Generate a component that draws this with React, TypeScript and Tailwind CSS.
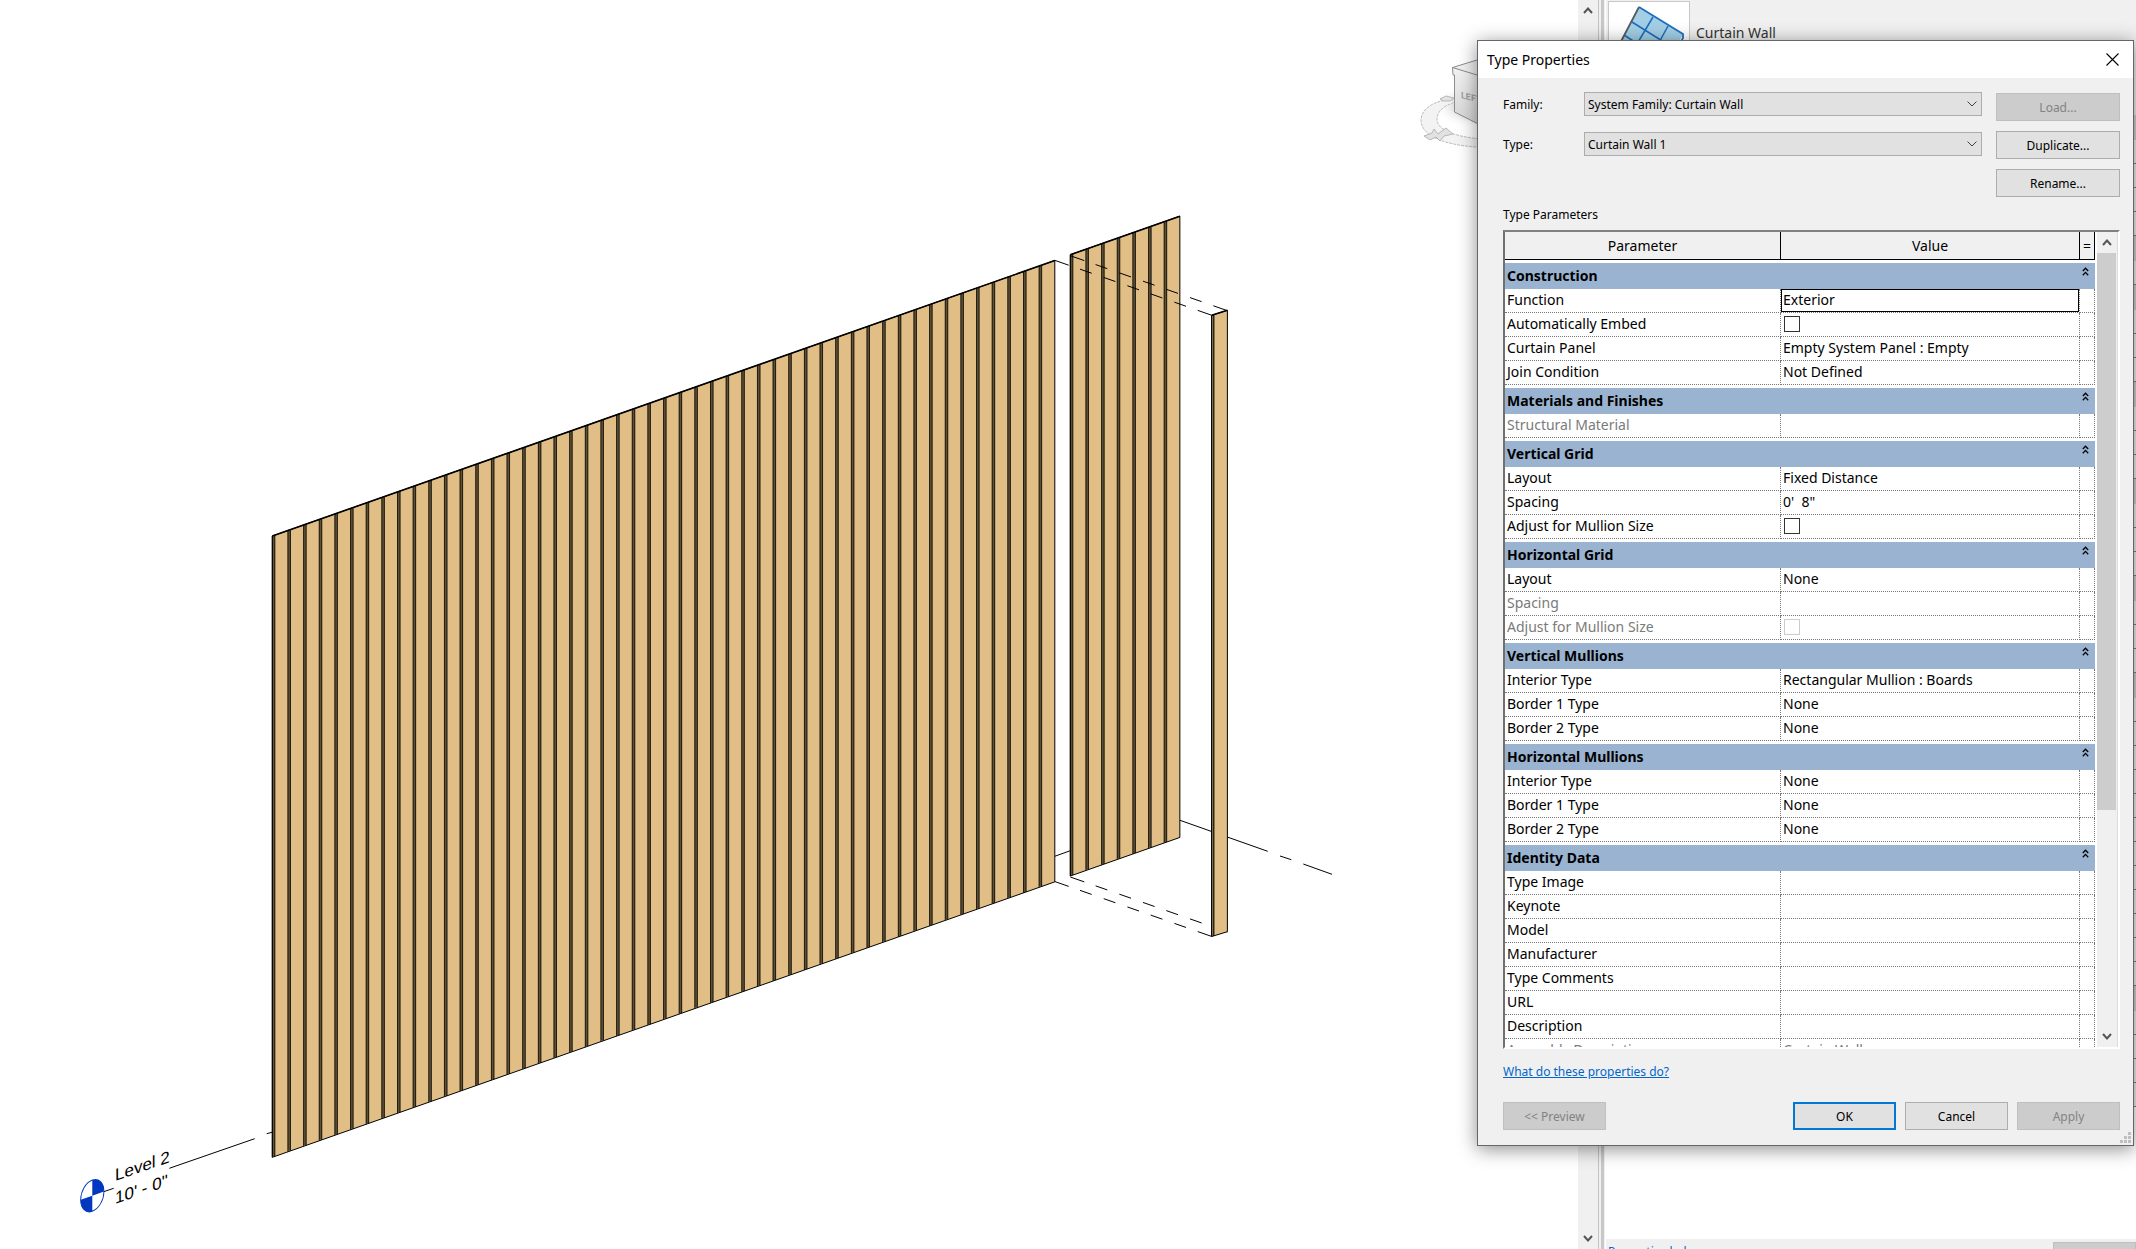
import { useState } from "react";
import type { ReactNode } from "react";
import clsx from "clsx";

type Param = {
  name: string;
  value?: string;
  kind?: "text" | "check" | "field";
  disabled?: boolean;
};

type Group = { title: string; params: Param[] };

const groups: Group[] = [
  {
    title: "Construction",
    params: [
      { name: "Function", value: "Exterior", kind: "field" },
      { name: "Automatically Embed", kind: "check" },
      { name: "Curtain Panel", value: "Empty System Panel : Empty" },
      { name: "Join Condition", value: "Not Defined" }
    ]
  },
  {
    title: "Materials and Finishes",
    params: [{ name: "Structural Material", disabled: true }]
  },
  {
    title: "Vertical Grid",
    params: [
      { name: "Layout", value: "Fixed Distance" },
      { name: "Spacing", value: "0'  8\"" },
      { name: "Adjust for Mullion Size", kind: "check" }
    ]
  },
  {
    title: "Horizontal Grid",
    params: [
      { name: "Layout", value: "None" },
      { name: "Spacing", disabled: true },
      { name: "Adjust for Mullion Size", kind: "check", disabled: true }
    ]
  },
  {
    title: "Vertical Mullions",
    params: [
      { name: "Interior Type", value: "Rectangular Mullion : Boards" },
      { name: "Border 1 Type", value: "None" },
      { name: "Border 2 Type", value: "None" }
    ]
  },
  {
    title: "Horizontal Mullions",
    params: [
      { name: "Interior Type", value: "None" },
      { name: "Border 1 Type", value: "None" },
      { name: "Border 2 Type", value: "None" }
    ]
  },
  {
    title: "Identity Data",
    params: [
      { name: "Type Image" },
      { name: "Keynote" },
      { name: "Model" },
      { name: "Manufacturer" },
      { name: "Type Comments" },
      { name: "URL" },
      { name: "Description" },
      { name: "Assembly Description", value: "Curtain Walls", disabled: true }
    ]
  }
];

// row counts of the instance property groups in the docked palette
const paletteGroups = [4, 1, 3, 3, 3, 3, 12, 4];

const PITCH = 15.65;
const SLOPE = 0.352;
const WALL_HEIGHT = 621.3;

// x ranges of each dash, measured along the offset line
const dashes = [
  [0, 14],
  [25.3, 37],
  [49, 60.7],
  [72.7, 84.3],
  [96, 107.7],
  [119.7, 131.3],
  [143, 157]
];

function Slats({ x, y, count }: { x: number; y: number; count: number }) {
  const width = count * PITCH;
  const rise = width * SLOPE;
  const outline = `M${x} ${y}L${x + width} ${y - rise}V${y - rise + WALL_HEIGHT}L${x} ${y + WALL_HEIGHT}Z`;

  return (
    <g>
      <path d={outline} fill="#e0be86" />
      {Array.from({ length: count }, (_, i) => {
        const left = x + i * PITCH;
        const top = y - i * PITCH * SLOPE;
        return (
          <g key={i}>
            <path d={`M${left - 0.3} ${top}h3.1v${WALL_HEIGHT - 1}h-3.1z`} fill="#5f5136" />
            <path
              d={`M${left} ${top}v${WALL_HEIGHT}M${left + 2.5} ${top - 1}v${WALL_HEIGHT}`}
              stroke="#16130b"
              strokeWidth="0.9"
            />
          </g>
        );
      })}
      <path d={outline} fill="none" stroke="#000" strokeWidth="1" />
      <path d={`M${x} ${y}L${x + width} ${y - rise}`} stroke="#000" strokeWidth="1.6" />
    </g>
  );
}

function OffsetLine({ x, y }: { x: number; y: number }) {
  const d = dashes.map(([a, b]) => `M${x + a} ${y + a * 0.35}L${x + b} ${y + b * 0.35}`).join("");
  return <path d={d} stroke="#000" strokeWidth="1" fill="none" />;
}

function ModelView() {
  return (
    <svg viewBox="0 0 1578 1249" preserveAspectRatio="xMinYMin meet" className="h-full w-full" role="img" aria-label="3D view">
      <defs>
        <linearGradient id="cube" x1="0" y1="0" x2="0" y2="1">
          <stop offset="0" stopColor="#f2f2f2" />
          <stop offset="1" stopColor="#cfcfcf" />
        </linearGradient>
        <radialGradient id="cubeShadow">
          <stop offset="0" stopColor="#9a9a9a" />
          <stop offset="1" stopColor="#fff" stopOpacity="0" />
        </radialGradient>
      </defs>

      <path
        d="M103.7 1191.7L113.7 1188.3M169.3 1168.3L254.7 1138.7M266.7 1133.7L273 1132M1054.7 856.3L1070.3 850.7M1180 820.3L1267.7 851.3M1280 856L1291.3 859.7M1303.3 864L1332 874.3"
        stroke="#000"
        strokeWidth="1"
      />
      <Slats x={272.3} y={536} count={50} />
      <Slats x={1070.3} y={254.7} count={7} />
      <OffsetLine x={1054.7} y={260.3} />
      <OffsetLine x={1070.3} y={255.7} />
      <OffsetLine x={1054.7} y={881.5} />
      <OffsetLine x={1070.3} y={877} />
      <path d="M1211.7 315.3L1227.4 310.3V931.7L1211.7 936.5Z" fill="#e0be86" stroke="#000" strokeWidth="1" />
      <path d="M1211.7 315.3V936.5M1213.8 315V936" stroke="#000" strokeWidth="1.2" />
      <path d="M1211.7 315.3L1227.4 310.3" stroke="#000" strokeWidth="1.6" />

      <g transform="matrix(0.75 -0.264 0 1 92.3 1195.7)">
        <circle r="15.5" fill="#fff" stroke="#0038c0" strokeWidth="1.2" />
        <path d="M0 0V-15.5A15.5 15.5 0 0 1 15.5 0ZM0 0V15.5A15.5 15.5 0 0 1 -15.5 0Z" fill="#0038c0" />
      </g>
      <g fontFamily="'Liberation Sans', sans-serif" fontSize="17" fill="#000">
        <text transform="translate(115 1181) skewY(-19)">Level 2</text>
        <text transform="translate(115 1204) skewY(-19)">10' - 0"</text>
      </g>

      {/* view cube, mostly under the dialog */}
      <ellipse cx="1470" cy="106" rx="36" ry="22" fill="url(#cubeShadow)" />
      <path
        d="M1452 99C1432 101 1421 110 1421 120C1421 138 1450 148 1500 148V140C1458 139 1437 131 1437 119C1437 112 1443 106 1453 103Z"
        fill="#f3f3f3"
        stroke="#bdbdbd"
        strokeDasharray="3 1"
      />
      <path d="M1440 99L1446 96L1454 98L1450 101L1443 101ZM1424 136L1432 133L1434 129L1438 134L1446 128L1453 134L1444 136L1440 141L1436 137L1430 140Z" fill="#e2e2e2" stroke="#a8a8a8" strokeWidth="0.8" />
      <path d="M1452.5 67.5L1500 53V86Z" fill="#f0f0f0" stroke="#8c8c8c" />
      <path d="M1452.5 67.5L1500 82V135L1454.5 112V75H1453Z" fill="url(#cube)" stroke="#8c8c8c" />
      <text transform="translate(1461 98) skewY(14)" fontFamily="Roboto, sans-serif" fontWeight="700" fontSize="9" fill="#9c9fa3">
        LEFT
      </text>
    </svg>
  );
}

function Chevron({ down, className }: { down?: boolean; className?: string }) {
  return (
    <svg viewBox="0 0 10 7" className={clsx("h-[7px] w-[10px]", className)} fill="none" stroke="#555" strokeWidth="2">
      <path d={down ? "M1 1L5 5.4L9 1" : "M1 6L5 1.6L9 6"} />
    </svg>
  );
}

function ViewScrollbar() {
  return (
    <div className="flex w-5 shrink-0 flex-col items-center justify-between bg-[#f0f0f0] pt-[7px] pb-[7px]">
      <button aria-label="Scroll up" className="flex">
        <Chevron />
      </button>
      <button aria-label="Scroll down" className="flex">
        <Chevron down />
      </button>
    </div>
  );
}

function PropertiesPalette() {
  return (
    <aside className="flex w-[538px] shrink-0 border-l border-[#c4c4c4] bg-[#f0f0f0]">
      <div className="mr-px ml-0.5 w-[3px] shrink-0 bg-[#c8c8c8]" />
      <div className="flex min-w-0 flex-1 flex-col overflow-hidden border-l border-white">
        <div className="flex h-[115px] shrink-0 gap-[6px] pt-px">
          <div className="ml-0.5 flex h-20 w-[82px] justify-center border border-[#c8c8c8] bg-white pt-1">
            <svg viewBox="0 0 70 76" className="h-[76px] w-[70px]">
              <path d="M25 1L69 28L45 73L2 45Z" fill="#a3cfe6" />
              <path d="M39 11L14 53M54 20L30 64M18 16L61 43M10 29L53 57" stroke="#1b6dbd" strokeWidth="1.5" />
              <path d="M25 1L69 28V32L45 73" fill="none" stroke="#1f6fc0" strokeWidth="1.8" />
              <path d="M25 1L2 45L45 73" fill="none" stroke="#555b60" strokeWidth="1.8" />
            </svg>
          </div>
          <p className="mt-[22px] text-sm leading-5 text-[#333]">Curtain Wall</p>
        </div>
        <div className="flex-1 overflow-hidden bg-white">
          {paletteGroups.map((rows, i) => (
            <div key={i}>
              <div className="h-[25px] bg-[#d2d2d2]" />
              {Array.from({ length: rows }, (_, r) => (
                <div key={r} className="h-6 border-b border-dashed border-[#808080] bg-[#f0f0f0]" />
              ))}
            </div>
          ))}
        </div>
        <div className="flex h-[10px] shrink-0 items-start justify-between overflow-hidden pt-[3px] pl-0.5">
          <a href="#help" className="text-xs leading-5 text-[#0066cc] underline">
            Properties help
          </a>
          <button className="h-7 w-[83px] border border-[#bfbfbf] bg-[#ccc]" aria-label="Apply properties" disabled />
        </div>
      </div>
    </aside>
  );
}

function Button({
  children,
  disabled,
  primary,
  wide
}: {
  children: ReactNode;
  disabled?: boolean;
  primary?: boolean;
  wide?: boolean;
}) {
  return (
    <button
      disabled={disabled}
      className={clsx(
        "h-7 pt-0.5 text-xs",
        wide ? "w-[124px]" : "w-[103px]",
        primary ? "border-2 border-[#0078d7]" : "border",
        disabled ? "border-[#bfbfbf] bg-[#ccc] text-[#838383]" : "bg-[#e1e1e1]",
        !disabled && !primary && "border-[#adadad]"
      )}
    >
      {children}
    </button>
  );
}

function Combo({ id, label, value }: { id: string; label: string; value: string }) {
  return (
    <div className="flex h-6 items-center">
      <label htmlFor={id} className="w-[81px] shrink-0 pt-0.5">
        {label}
      </label>
      <div className="relative flex-1">
        <select id={id} className="block h-6 w-full appearance-none border border-[#adadad] bg-[#e1e1e1] px-[3px] pt-0.5 text-xs" defaultValue={value}>
          <option>{value}</option>
        </select>
        <svg viewBox="0 0 10 6" className="pointer-events-none absolute top-[9px] right-[5px] h-[6px] w-[10px]" fill="none" stroke="#444">
          <path d="M0.5 0.5L5 5L9.5 0.5" />
        </svg>
      </div>
    </div>
  );
}

function ParamRow({ group, param }: { group: string; param: Param }) {
  const id = `${group}-${param.name}`.replace(/\s+/g, "-").toLowerCase();
  const cell = "h-6 border-r border-b border-dotted border-[#777] p-0 align-top";

  return (
    <tr className={param.disabled ? "text-[#7a7a7a]" : ""}>
      <td className={clsx(cell, "pl-0.5")}>
        {param.kind ? <label htmlFor={id}>{param.name}</label> : param.name}
      </td>
      <td className={cell}>
        {param.kind === "field" ? (
          <input id={id} defaultValue={param.value} className="block h-[23px] w-full border border-black bg-white px-px pb-0.5 outline-none" />
        ) : param.kind === "check" ? (
          <input
            id={id}
            type="checkbox"
            disabled={param.disabled}
            className={clsx("mt-[3px] ml-[3px] block size-4 appearance-none border bg-white", param.disabled ? "border-[#ccc]" : "border-[#333]")}
          />
        ) : (
          <span className="pl-0.5 whitespace-pre">{param.value}</span>
        )}
      </td>
      <td className={cell} />
    </tr>
  );
}

function ParameterTable() {
  const [closed, setClosed] = useState<string[]>([]);

  function toggle(title: string) {
    setClosed((prev) => (prev.includes(title) ? prev.filter((t) => t !== title) : [...prev, title]));
  }

  return (
    <div className="flex min-h-0 flex-1 border-2 border-t-[#808080] border-r-white border-b-white border-l-[#707070] bg-white">
      <div className="min-w-0 flex-1 overflow-hidden">
        <table className="w-full table-fixed border-separate border-spacing-0 text-sm leading-[22px]">
          <colgroup>
            <col className="w-[276px]" />
            <col />
            <col className="w-[15px]" />
          </colgroup>
          <thead>
            <tr className="bg-[#f0f0f0]">
              <th className="h-7 border-r border-b border-black p-0 font-normal">Parameter</th>
              <th className="h-7 border-r border-b border-black p-0 font-normal">Value</th>
              <th className="h-7 border-r border-b border-black p-0 font-normal">=</th>
            </tr>
          </thead>
          {groups.map((group) => (
            <tbody key={group.title}>
              <tr className="text-left">
                <th colSpan={3} className="border-t-[3px] border-white bg-[#9ab3d1] p-0">
                  <div className="flex h-[26px] items-start justify-between pr-[6px] pl-0.5">
                    <span className="leading-[26px]">{group.title}</span>
                    <button onClick={() => toggle(group.title)} aria-label={`Toggle ${group.title}`} className="mt-1">
                      <svg viewBox="0 0 7 9" className="block h-[9px] w-[7px]" fill="none" stroke="#000" strokeWidth="1.3">
                        <path d="M0.8 4L3.5 1.2L6.2 4M0.8 8.2L3.5 5.4L6.2 8.2" />
                      </svg>
                    </button>
                  </div>
                </th>
              </tr>
              {!closed.includes(group.title) &&
                group.params.map((param) => <ParamRow key={param.name} group={group.title} param={param} />)}
            </tbody>
          ))}
        </table>
      </div>
      <div className="ml-0.5 flex w-[21px] shrink-0 flex-col items-center border-r border-[#dcdcdc] bg-[#f0f0f0]">
        <button aria-label="Scroll parameters up" className="flex h-[21px] items-center">
          <Chevron />
        </button>
        <div className="mr-px w-[19px] flex-[557] self-stretch bg-[#cdcdcd]" />
        <div className="flex-[216]" />
        <button aria-label="Scroll parameters down" className="flex h-[21px] items-center">
          <Chevron down />
        </button>
      </div>
    </div>
  );
}

function TypePropertiesDialog() {
  return (
    <div
      role="dialog"
      aria-label="Type Properties"
      className="absolute top-10 right-0.5 bottom-[103px] flex w-[657px] flex-col border border-[#666] bg-[#f0f0f0] text-xs shadow-[0_3px_18px_rgba(0,0,0,0.45)]"
    >
      <header className="flex h-[37px] shrink-0 items-center justify-between bg-white pr-[14px] pl-[9px]">
        <h1 className="text-sm">Type Properties</h1>
        <button aria-label="Close">
          <svg viewBox="0 0 13 13" className="size-[13px]" stroke="#000" strokeWidth="1.1">
            <path d="M0.5 0.5L12.5 12.5M12.5 0.5L0.5 12.5" />
          </svg>
        </button>
      </header>

      <div className="flex min-h-0 flex-1 flex-col pt-[14px] pr-[13px] pb-[15px] pl-[25px]">
        <div className="flex gap-[14px]">
          <div className="flex flex-1 flex-col gap-4">
            <Combo id="family" label="Family:" value="System Family: Curtain Wall" />
            <Combo id="type" label="Type:" value="Curtain Wall 1" />
          </div>
          <div className="flex flex-col gap-[10px] pt-px">
            <Button wide disabled>
              Load...
            </Button>
            <Button wide>Duplicate...</Button>
            <Button wide>Rename...</Button>
          </div>
        </div>

        <h2 className="pt-[10px] pb-[7px] leading-4">Type Parameters</h2>
        <ParameterTable />

        <div className="pt-[14px] leading-[18px]">
          <a href="#help" className="text-[#0066cc] underline">
            What do these properties do?
          </a>
        </div>

        <footer className="flex gap-[9px] pt-[21px]">
          <Button disabled>&lt;&lt; Preview</Button>
          <div className="flex-1" />
          <Button primary>OK</Button>
          <Button>Cancel</Button>
          <Button disabled>Apply</Button>
        </footer>
      </div>

      <svg viewBox="0 0 11 11" className="absolute right-0.5 bottom-0.5 size-[11px]" fill="#bfbfbf">
        <path d="M8 0h3v3H8zM8 4h3v3H8zM4 4h3v3H4zM8 8h3v3H8zM4 8h3v3H4zM0 8h3v3H0z" />
      </svg>
    </div>
  );
}

export default function App() {
  return (
    <div className="relative flex h-screen overflow-hidden bg-white font-['Noto_Sans','Open_Sans',sans-serif] text-black">
      <main className="min-w-0 flex-1">
        <ModelView />
      </main>
      <ViewScrollbar />
      <PropertiesPalette />
      <TypePropertiesDialog />
    </div>
  );
}
